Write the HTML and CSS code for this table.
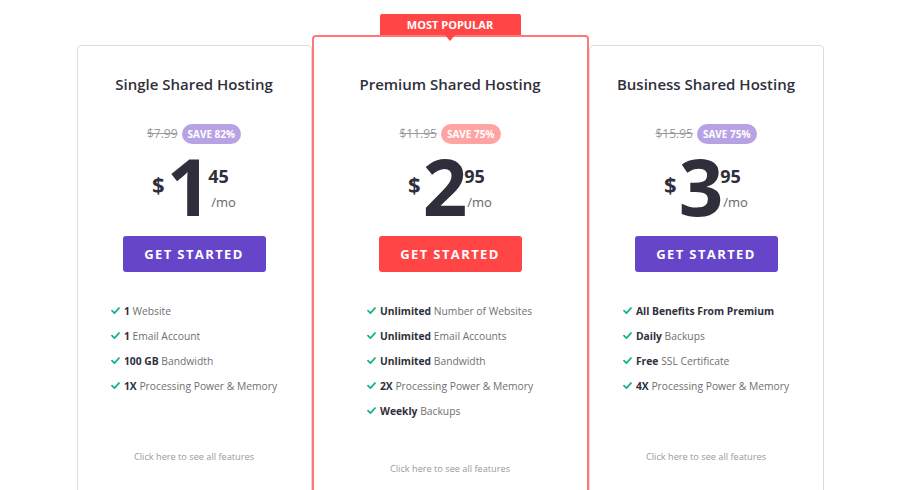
FILE: index.html
```html
<!DOCTYPE html>
<html lang="en">
<head>
<meta charset="utf-8">
<title>Hosting Plans</title>
<link rel="stylesheet" href="styles.css">
</head>
<body>
<div class="plans">
  <div class="card">
    <h2 class="title">Single Shared Hosting</h2>
    <div class="old">
      <span class="old-price">$7.99</span>
      <span class="badge">SAVE 82%</span>
    </div>
    <div class="price">
      <span class="cur">$</span>
      <span class="big">1</span>
      <span class="side"><span class="cents">45</span><span class="mo">/mo</span></span>
    </div>
    <a class="btn" href="#">GET STARTED</a>
    <ul class="features">
      <li><svg class="chk" viewBox="0 0 10 8"><path d="M1 4.2 L3.8 7 L9 1.2"/></svg><b>1</b> Website</li>
      <li><svg class="chk" viewBox="0 0 10 8"><path d="M1 4.2 L3.8 7 L9 1.2"/></svg><b>1</b> Email Account</li>
      <li><svg class="chk" viewBox="0 0 10 8"><path d="M1 4.2 L3.8 7 L9 1.2"/></svg><b>100 GB</b> Bandwidth</li>
      <li><svg class="chk" viewBox="0 0 10 8"><path d="M1 4.2 L3.8 7 L9 1.2"/></svg><b>1X</b> Processing Power &amp; Memory</li>
    </ul>
    <a class="more" href="#">Click here to see all features</a>
  </div>

  <div class="featured-wrap">
    <div class="ribbon">MOST POPULAR</div>
    <div class="card card--featured">
      <h2 class="title">Premium Shared Hosting</h2>
      <div class="old">
        <span class="old-price">$11.95</span>
        <span class="badge badge--red">SAVE 75%</span>
      </div>
      <div class="price">
        <span class="cur">$</span>
        <span class="big">2</span>
        <span class="side"><span class="cents">95</span><span class="mo">/mo</span></span>
      </div>
      <a class="btn btn--red" href="#">GET STARTED</a>
      <ul class="features">
        <li><svg class="chk" viewBox="0 0 10 8"><path d="M1 4.2 L3.8 7 L9 1.2"/></svg><b>Unlimited</b> Number of Websites</li>
        <li><svg class="chk" viewBox="0 0 10 8"><path d="M1 4.2 L3.8 7 L9 1.2"/></svg><b>Unlimited</b> Email Accounts</li>
        <li><svg class="chk" viewBox="0 0 10 8"><path d="M1 4.2 L3.8 7 L9 1.2"/></svg><b>Unlimited</b> Bandwidth</li>
        <li><svg class="chk" viewBox="0 0 10 8"><path d="M1 4.2 L3.8 7 L9 1.2"/></svg><b>2X</b> Processing Power &amp; Memory</li>
        <li><svg class="chk" viewBox="0 0 10 8"><path d="M1 4.2 L3.8 7 L9 1.2"/></svg><b>Weekly</b> Backups</li>
      </ul>
      <a class="more" href="#">Click here to see all features</a>
    </div>
  </div>

  <div class="card">
    <h2 class="title">Business Shared Hosting</h2>
    <div class="old">
      <span class="old-price">$15.95</span>
      <span class="badge">SAVE 75%</span>
    </div>
    <div class="price">
      <span class="cur">$</span>
      <span class="big">3</span>
      <span class="side"><span class="cents">95</span><span class="mo">/mo</span></span>
    </div>
    <a class="btn" href="#">GET STARTED</a>
    <ul class="features">
      <li><svg class="chk" viewBox="0 0 10 8"><path d="M1 4.2 L3.8 7 L9 1.2"/></svg><b>All Benefits From Premium</b></li>
      <li><svg class="chk" viewBox="0 0 10 8"><path d="M1 4.2 L3.8 7 L9 1.2"/></svg><b>Daily</b> Backups</li>
      <li><svg class="chk" viewBox="0 0 10 8"><path d="M1 4.2 L3.8 7 L9 1.2"/></svg><b>Free</b> SSL Certificate</li>
      <li><svg class="chk" viewBox="0 0 10 8"><path d="M1 4.2 L3.8 7 L9 1.2"/></svg><b>4X</b> Processing Power &amp; Memory</li>
    </ul>
    <a class="more" href="#">Click here to see all features</a>
  </div>
</div>
</body>
</html>
```

FILE: styles.css
```css
html, body {
  margin: 0;
  padding: 0;
  background: #fff;
  overflow: hidden;
  height: 490px;
}
body {
  font-family: "Open Sans", "DejaVu Sans", sans-serif;
  color: #2f2f3b;
}
.plans {
  display: flex;
  justify-content: center;
  align-items: flex-start;
  padding-top: 14px;
}
.card {
  box-sizing: border-box;
  width: 235px;
  height: 520px;
  margin-top: 31px;
  border: 1px solid #dcdcdc;
  border-radius: 4px;
  padding-top: 28px;
  display: flex;
  flex-direction: column;
  align-items: center;
  background: #fff;
}
.featured-wrap {
  position: relative;
  z-index: 2;
  display: flex;
  flex-direction: column;
  align-items: center;
  width: 277px;
}
.ribbon {
  position: relative;
  width: 141px;
  height: 21px;
  line-height: 21px;
  background: #ff4545;
  color: #fff;
  font-size: 11px;
  font-weight: 700;
  text-align: center;
  border-radius: 2px 2px 0 0;
}
.ribbon::after {
  content: "";
  position: absolute;
  left: 50%;
  bottom: -6px;
  margin-left: -5px;
  border-left: 5px solid transparent;
  border-right: 5px solid transparent;
  border-top: 6px solid #ff4545;
  z-index: 3;
}
.card--featured {
  width: 277px;
  margin-top: 0;
  border: 2px solid #ff7777;
  padding-top: 37px;
}
.title {
  margin: 0;
  font-size: 15px;
  line-height: 20px;
  font-weight: 600;
  color: #2f2f3b;
}
.old {
  margin-top: 30px;
  height: 20px;
  display: flex;
  align-items: center;
  gap: 4px;
}
.old-price {
  font-size: 12px;
  line-height: 16px;
  color: #9a9a9a;
  text-decoration: line-through;
}
.badge {
  height: 20px;
  line-height: 20px;
  padding: 0 6px;
  border-radius: 10px;
  background: #b7a3e3;
  color: #fff;
  font-size: 10px;
  font-weight: 700;
}
.badge--red {
  background: #ffa3a3;
}
.price {
  margin-top: 2px;
  display: flex;
  align-items: flex-start;
  height: 80px;
  color: #2f2f3b;
}
.cur {
  font-size: 22px;
  line-height: 22px;
  font-weight: 700;
  margin-top: 27px;
  margin-right: 2px;
}
.big {
  font-size: 78px;
  line-height: 80px;
  font-weight: 700;
  letter-spacing: -4px;
}
.side {
  display: flex;
  flex-direction: column;
  margin-left: 1px;
}
.cents {
  font-size: 18px;
  line-height: 18px;
  font-weight: 700;
  margin-top: 21px;
}
.mo {
  font-size: 13px;
  line-height: 13px;
  color: #666;
  margin-top: 11px;
  margin-left: 3px;
}
.btn {
  margin-top: 10px;
  width: 143px;
  height: 36px;
  line-height: 36px;
  border-radius: 3px;
  background: #6745c9;
  color: #fff;
  text-align: center;
  text-decoration: none;
  font-size: 13px;
  font-weight: 700;
  letter-spacing: 1.4px;
}
.btn--red {
  background: #ff4545;
}
.features {
  list-style: none;
  margin: 26px 0 0;
  padding: 0;
  width: max-content;
}
.features li {
  display: flex;
  align-items: center;
  height: 25px;
  font-size: 10.3px;
  color: #707070;
  white-space: pre;
}
.features b {
  color: #2f2f3b;
  font-weight: 700;
}
.chk {
  width: 9px;
  height: 7px;
  margin-right: 4px;
  fill: none;
  stroke: #16b38a;
  stroke-width: 2;
  stroke-linecap: round;
  stroke-linejoin: round;
}
.more {
  margin-top: 52px;
  font-size: 9.2px;
  line-height: 14px;
  color: #9a9a9a;
  text-decoration: none;
}
.card--featured .more {
  margin-top: 39px;
}
```
